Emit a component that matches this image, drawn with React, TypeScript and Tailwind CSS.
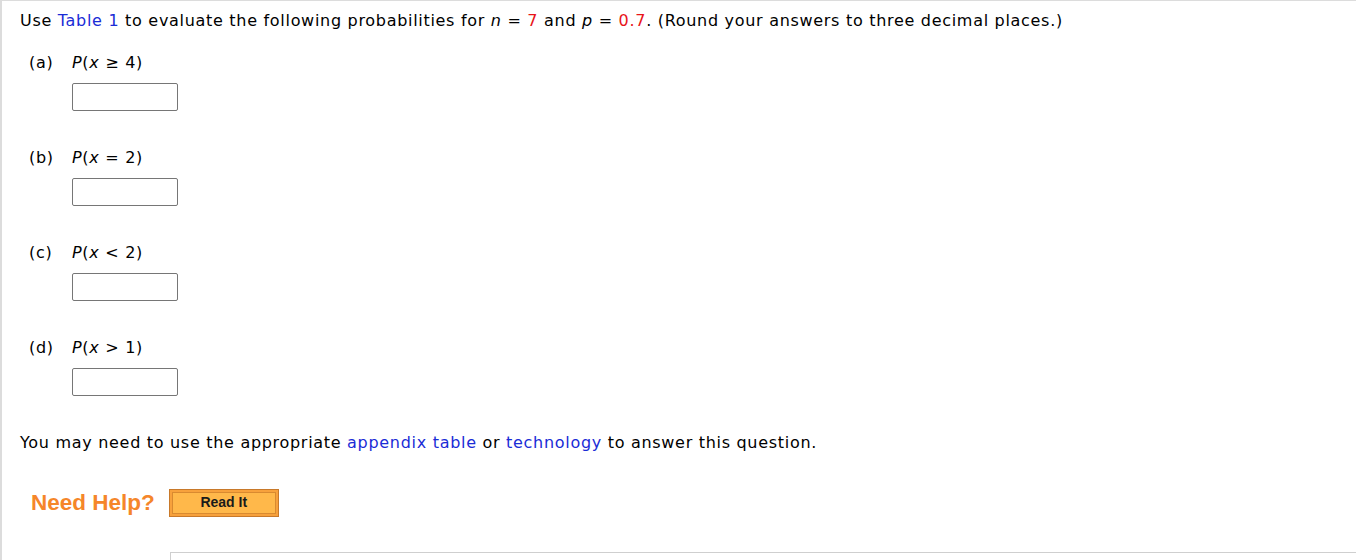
import React from "react";

const parts = [
  { key: "a", expr: "≥ 4" },
  { key: "b", expr: "= 2" },
  { key: "c", expr: "< 2" },
  { key: "d", expr: "> 1" },
];

function Part({ label, expr }: { label: string; expr: string }) {
  return (
    <div className="h-[95px]">
      <div className="flex h-[22px] items-center">
        <span className="w-[43px]">({label})</span>
        <span>
          <i>P</i>(<i>x</i> {expr})
        </span>
      </div>
      <div className="mt-[9px] pl-[43px]">
        <input
          type="text"
          className="h-[28px] w-[106px] rounded-[2px] border border-[#767676] bg-white px-1 outline-none"
        />
      </div>
    </div>
  );
}

export default function App() {
  return (
    <div className="h-[560px] overflow-hidden bg-white text-[16px] tracking-[0.7px] text-black [font-family:'DejaVu_Sans',Verdana,sans-serif]">
      <div className="border-l-2 border-t border-[#dcdcdc]">
        <div className="pl-[18px] pt-[9px]">
          <p className="h-[22px] leading-[22px]">
            Use <a className="text-[#1a2cd6]">Table 1</a> to evaluate the following probabilities
            for <i>n</i> = <span className="text-[#e8141a]">7</span> and <i>p</i> ={" "}
            <span className="text-[#e8141a]">0.7</span>. (Round your answers to three decimal
            places.)
          </p>
          <div className="mt-[20px] pl-[9px]">
            {parts.map((p) => (
              <Part key={p.key} label={p.key} expr={p.expr} />
            ))}
          </div>
          <p className="h-[22px] leading-[22px]">
            You may need to use the appropriate{" "}
            <a className="text-[#1a2cd6]">appendix table</a> or{" "}
            <a className="text-[#1a2cd6]">technology</a> to answer this question.
          </p>
          <div className="mt-[32px] flex items-center pl-[11px] tracking-normal">
            <span className="text-[22.5px] font-bold text-[#f5862a] [font-family:'Liberation_Sans',Arial,sans-serif]">
              Need Help?
            </span>
            <button className="ml-[14px] h-[28px] w-[110px] border border-[#c8792a] bg-[#f7a13c] p-[2px]">
              <span className="flex h-full w-full items-center justify-center border border-[#d98a30] bg-[#ffb84a] text-[14px] font-bold text-[#1a1a1a] [font-family:'Liberation_Sans',Arial,sans-serif]">
                Read It
              </span>
            </button>
          </div>
        </div>
        <div className="ml-[168px] mt-[32px] h-[8px] border-l border-t border-[#cfcfcf]" />
      </div>
    </div>
  );
}
